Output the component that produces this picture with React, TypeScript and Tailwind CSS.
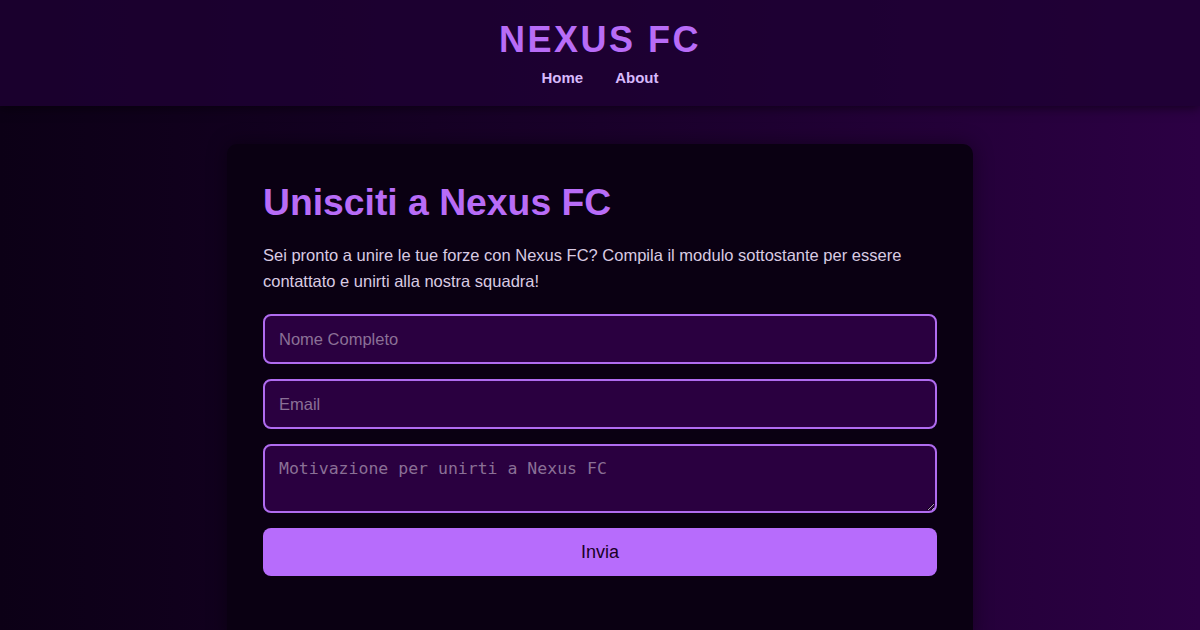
import React from "react";

export default function App() {
  return (
    <div
      className="min-h-[630px] w-full bg-gradient-to-r from-[#0c0016] via-[#1a002b] to-[#2c0044] text-[#e0d0ea]"
      style={{ fontFamily: '"Liberation Sans", Arial, sans-serif' }}
    >
      <header className="flex h-[106px] flex-col items-center bg-[#1e0033]/80 shadow-[0_2px_10px_rgba(0,0,0,0.5)]">
        <h1 className="mt-[19px] text-[36px] font-bold leading-[42px] tracking-[2.5px] text-[#b86cf7]">
          NEXUS FC
        </h1>
        <nav className="mt-[6px] flex gap-[32px] text-[15px] font-bold text-[#d8b9fb]">
          <a>Home</a>
          <a>About</a>
        </nav>
      </header>
      <main className="flex justify-center pt-[38px]">
        <section className="h-[500px] w-[746px] rounded-[10px] bg-[#0a0012] px-[36px] pt-[36px] shadow-[0_0_20px_rgba(0,0,0,0.4)]">
          <h2 className="text-[37.3px] font-bold leading-[44px] text-[#b86cf7]">Unisciti a Nexus FC</h2>
          <p className="mt-[18px] text-[16.5px] leading-[26px] text-[#d9cbe2]">
            Sei pronto a unire le tue forze con Nexus FC? Compila il modulo sottostante per essere contattato e unirti alla nostra squadra!
          </p>
          <form className="mt-[20px] flex flex-col gap-[15px]">
            <input
              placeholder="Nome Completo"
              className="h-[50px] w-full rounded-[8px] border-2 border-[#b06cf0] bg-[#2a0040] px-[14px] text-[16.5px] text-[#e0d0ea] outline-none placeholder:text-[#8a7096]"
            />
            <input
              placeholder="Email"
              className="h-[50px] w-full rounded-[8px] border-2 border-[#b06cf0] bg-[#2a0040] px-[14px] text-[16.5px] text-[#e0d0ea] outline-none placeholder:text-[#8a7096]"
            />
            <textarea
              placeholder="Motivazione per unirti a Nexus FC"
              className="h-[69px] w-full rounded-[8px] border-2 border-[#b06cf0] bg-[#2a0040] px-[14px] pt-[13px] text-[16.5px] leading-[20px] text-[#e0d0ea] outline-none placeholder:text-[#8a7096]"
              style={{ fontFamily: '"DejaVu Sans Mono", monospace' }}
            />
            <button
              type="button"
              className="h-[48px] w-full rounded-[8px] bg-[#b76cfc] text-[18px] text-[#1a0026]"
            >
              Invia
            </button>
          </form>
        </section>
      </main>
    </div>
  );
}
